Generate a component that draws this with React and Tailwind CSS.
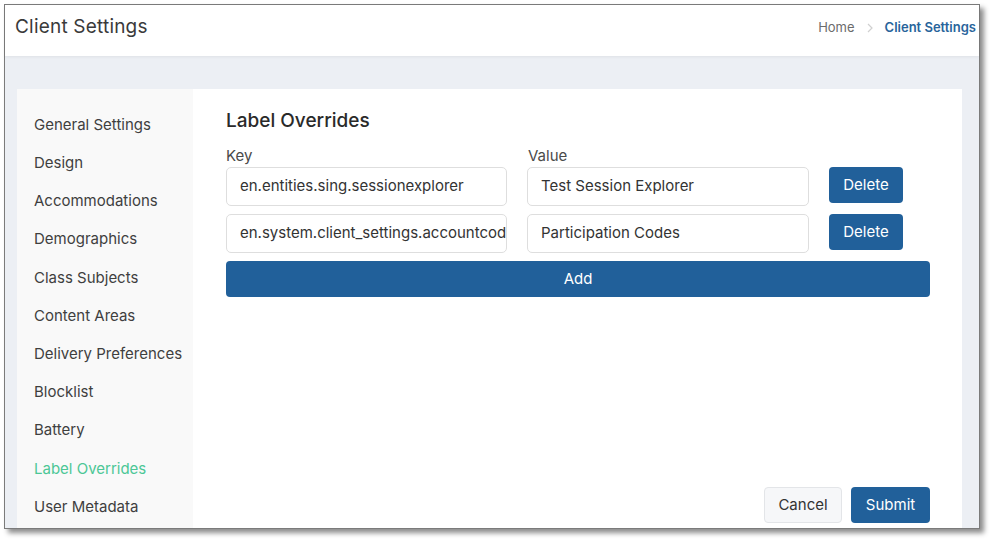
import React from "react";

const nav = [
  "General Settings",
  "Design",
  "Accommodations",
  "Demographics",
  "Class Subjects",
  "Content Areas",
  "Delivery Preferences",
  "Blocklist",
  "Battery",
  "Label Overrides",
  "User Metadata",
];

const rows = [
  { key: "en.entities.sing.sessionexplorer", value: "Test Session Explorer" },
  { key: "en.system.client_settings.accountcodes", value: "Participation Codes" },
];

export default function App() {
  return (
    <div
      className="w-[992px] h-[543px] bg-white overflow-hidden"
      style={{ fontFamily: "Inter, 'Open Sans', sans-serif" }}
    >
      <div className="ml-[4px] mt-[4px] w-[976px] h-[525px] border border-[#7b7b7b] shadow-[4px_4px_5px_rgba(0,0,0,0.45)] flex flex-col bg-[#eceff4]">
        <header className="h-[51px] shrink-0 bg-white flex items-start justify-between pt-[8px] pl-[10px] pr-[3px] shadow-[0_1px_3px_rgba(0,0,0,0.06)]">
          <h1 className="text-[19px] leading-[28px] text-[#3a3a3a] tracking-[0.2px]">Client Settings</h1>
          <nav className="flex items-center text-[13px] h-[30px]">
            <span className="text-[#6b6b6b]">Home</span>
            <svg className="mx-[10px]" width="10" height="12" viewBox="0 0 10 12" fill="none">
              <path d="M3 2l4 4-4 4" stroke="#d0d0d0" strokeWidth="1.2" />
            </svg>
            <span className="text-[#28649b] font-semibold">Client Settings</span>
          </nav>
        </header>
        <div className="flex-1 flex pt-[33px] pl-[12px] pr-[17px] min-h-0">
          <div className="flex-1 flex bg-white">
            <aside className="w-[176px] shrink-0 bg-[#f9f9f9] pt-[17px] pl-[17px]">
              {nav.map((item) => (
                <div
                  key={item}
                  className={
                    "h-[38.2px] flex items-center text-[15px] " +
                    (item === "Label Overrides" ? "text-[#4cc796]" : "text-[#3f3f3f]")
                  }
                >
                  {item}
                </div>
              ))}
            </aside>
            <main className="flex-1 flex flex-col pl-[33px] pr-[31px] pt-[18px] pb-[5px]">
              <h2 className="text-[19px] font-medium text-[#2a2a2a] leading-[28px]">Label Overrides</h2>
              <div className="flex gap-[21px] mt-[10px] text-[15px] text-[#4a4a4a] leading-[22px]">
                <div className="w-[281px]">Key</div>
                <div className="w-[281px]">Value</div>
              </div>
              <div className="flex flex-col gap-[8px] mt-[0px]">
                {rows.map((r, i) => (
                  <div key={i} className="flex items-start">
                    <div className="w-[281px] h-[39px] border border-[#dedede] rounded-[5px] flex items-center pl-[13px] pr-[4px] overflow-hidden whitespace-nowrap text-[15px] text-[#333]">
                      {r.key}
                    </div>
                    <div className="w-[282px] ml-[20px] h-[39px] border border-[#dedede] rounded-[5px] flex items-center pl-[13px] overflow-hidden whitespace-nowrap text-[15px] text-[#333]">
                      {r.value}
                    </div>
                    <button className="ml-[20px] w-[74px] h-[36px] rounded-[4px] bg-[#21609a] text-white text-[15px]">
                      Delete
                    </button>
                  </div>
                ))}
              </div>
              <button className="mt-[8px] w-[704px] h-[36px] rounded-[4px] bg-[#21609a] text-white text-[15px]">
                Add
              </button>
              <div className="mt-auto flex justify-end gap-[9px] w-[704px]">
                <button className="w-[78px] h-[36px] rounded-[4px] bg-[#f6f7f9] border border-[#e3e5e8] text-[#333] text-[15px]">
                  Cancel
                </button>
                <button className="w-[79px] h-[36px] rounded-[4px] bg-[#21609a] text-white text-[15px]">
                  Submit
                </button>
              </div>
            </main>
          </div>
        </div>
      </div>
    </div>
  );
}
